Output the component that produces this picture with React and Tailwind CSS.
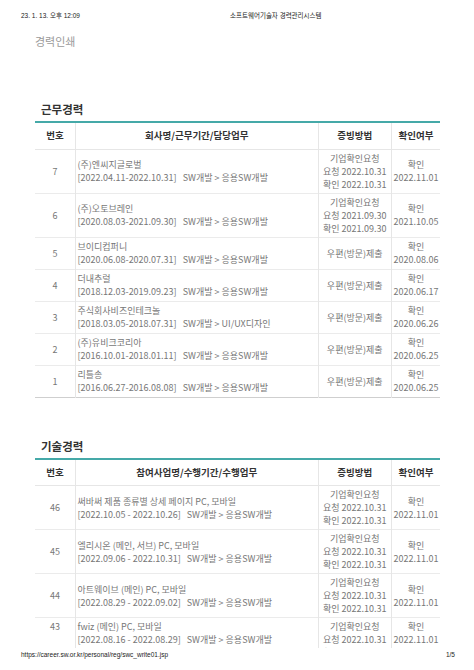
const work = [
  { no: '7', name: '(주)엔씨지글로벌', period: '[2022.04.11-2022.10.31]', job: 'SW개발 > 응용SW개발', proof: ['기업확인요청', '요청 2022.10.31', '확인 2022.10.31'], ok: '2022.11.01' },
  { no: '6', name: '(주)오토브레인', period: '[2020.08.03-2021.09.30]', job: 'SW개발 > 응용SW개발', proof: ['기업확인요청', '요청 2021.09.30', '확인 2021.09.30'], ok: '2021.10.05' },
  { no: '5', name: '브이디컴퍼니', period: '[2020.06.08-2020.07.31]', job: 'SW개발 > 응용SW개발', proof: ['우편(방문)제출'], ok: '2020.08.06' },
  { no: '4', name: '더내추럴', period: '[2018.12.03-2019.09.23]', job: 'SW개발 > 응용SW개발', proof: ['우편(방문)제출'], ok: '2020.06.17' },
  { no: '3', name: '주식회사비즈인테크놀', period: '[2018.03.05-2018.07.31]', job: 'SW개발 > UI/UX디자인', proof: ['우편(방문)제출'], ok: '2020.06.26' },
  { no: '2', name: '(주)유비크코리아', period: '[2016.10.01-2018.01.11]', job: 'SW개발 > 응용SW개발', proof: ['우편(방문)제출'], ok: '2020.06.25' },
  { no: '1', name: '리틀송', period: '[2016.06.27-2016.08.08]', job: 'SW개발 > 응용SW개발', proof: ['우편(방문)제출'], ok: '2020.06.25' },
];

const tech = [
  { no: '46', name: '써바써 제품 종류별 상세 페이지 PC, 모바일', period: '[2022.10.05 - 2022.10.26]', job: 'SW개발 > 응용SW개발', proof: ['기업확인요청', '요청 2022.10.31', '확인 2022.10.31'], ok: '2022.11.01' },
  { no: '45', name: '엘리시온 (메인, 서브) PC, 모바일', period: '[2022.09.06 - 2022.10.31]', job: 'SW개발 > 응용SW개발', proof: ['기업확인요청', '요청 2022.10.31', '확인 2022.10.31'], ok: '2022.11.01' },
  { no: '44', name: '아트웨이브 (메인) PC, 모바일', period: '[2022.08.29 - 2022.09.02]', job: 'SW개발 > 응용SW개발', proof: ['기업확인요청', '요청 2022.10.31', '확인 2022.10.31'], ok: '2022.11.01' },
  { no: '43', name: 'fwiz (메인) PC, 모바일', period: '[2022.08.16 - 2022.08.29]', job: 'SW개발 > 응용SW개발', proof: ['기업확인요청', '요청 2022.10.31', '확인 2022.10.31'], ok: '2022.11.01', top: true },
];

export default function App() {
  return (
    <div className="w-[474px] h-[670px] bg-white flex flex-col overflow-hidden font-['Noto_Sans_CJK_KR','Noto_Sans',sans-serif]">
      {/* print header */}
      <div className="h-[24px] pt-[12px] pl-[21px] flex text-[6.5px] leading-[8px] text-[#222] font-['Liberation_Sans','Noto_Sans_CJK_KR',sans-serif]">
        <span className="w-[209px]">23. 1. 13. 오후 12:09</span>
        <span>소프트웨어기술자 경력관리시스템</span>
      </div>

      <div className="h-[624px] overflow-hidden pl-[35px]">
        <div className="mt-[10px] text-[11px] leading-[14px] text-[#9a9a9a]">경력인쇄</div>

        <Section title="근무경력" col="회사명/근무기간/담당업무" rows={work} className="mt-[54px]" />
        <Section title="기술경력" col="참여사업명/수행기간/수행업무" rows={tech} className="mt-[41px]" />
      </div>

      <div className="flex pl-[21px] pr-[19px] pt-[3px] text-[6.5px] leading-[8px] text-[#222] font-['Liberation_Sans',sans-serif]">
        <span>https://career.sw.or.kr/personal/reg/swc_write01.jsp</span>
        <span className="ml-auto">1/5</span>
      </div>
    </div>
  );
}

function Section({ title, col, rows, className }) {
  return (
    <div className={className}>
      <div className="pl-[6px] h-[19px] text-[11.5px] leading-[14px] font-bold text-[#333]">{title}</div>
      <table className="w-[405px] border-collapse border-t-2 border-[#45a9a8] text-[9px] leading-[13px] text-[#777] table-fixed">
        <colgroup>
          <col className="w-[40.5px]" />
          <col className="w-[242.5px]" />
          <col className="w-[73.5px]" />
          <col className="w-[48.5px]" />
        </colgroup>
        <thead>
          <tr className="h-[27px] border-b border-[#e6e6e6] text-[#333] text-[9.5px]">
            <th className="font-bold">번호</th>
            <th className="font-bold border-l border-[#e6e6e6]">{col}</th>
            <th className="font-bold border-l border-[#e6e6e6]">증빙방법</th>
            <th className="font-bold border-l border-[#e6e6e6]">확인여부</th>
          </tr>
        </thead>
        <tbody>
          {rows.map((r, i) => {
            const pad = r.proof.length > 1 ? 'py-[2px]' : 'py-[2.5px]';
            const va = r.top ? 'align-top' : '';
            return (
              <tr key={r.no} className={i === rows.length - 1 ? 'border-b border-[#cfcfcf]' : 'border-b border-[#ebebeb]'}>
                <td className={`text-center ${pad} ${va}`}>{r.no}</td>
                <td className={`pl-[1.5px] ${pad} border-l border-[#e6e6e6] whitespace-nowrap ${va}`}>
                  <div>{r.name}</div>
                  <div className="whitespace-pre">{r.period + '   ' + r.job}</div>
                </td>
                <td className={`text-center ${pad} border-l border-[#e6e6e6] whitespace-nowrap ${va}`}>
                  {r.proof.map((p) => (
                    <div key={p}>{p}</div>
                  ))}
                </td>
                <td className={`text-center ${pad} border-l border-[#e6e6e6] whitespace-nowrap ${va}`}>
                  <div>확인</div>
                  <div>{r.ok}</div>
                </td>
              </tr>
            );
          })}
        </tbody>
      </table>
    </div>
  );
}
